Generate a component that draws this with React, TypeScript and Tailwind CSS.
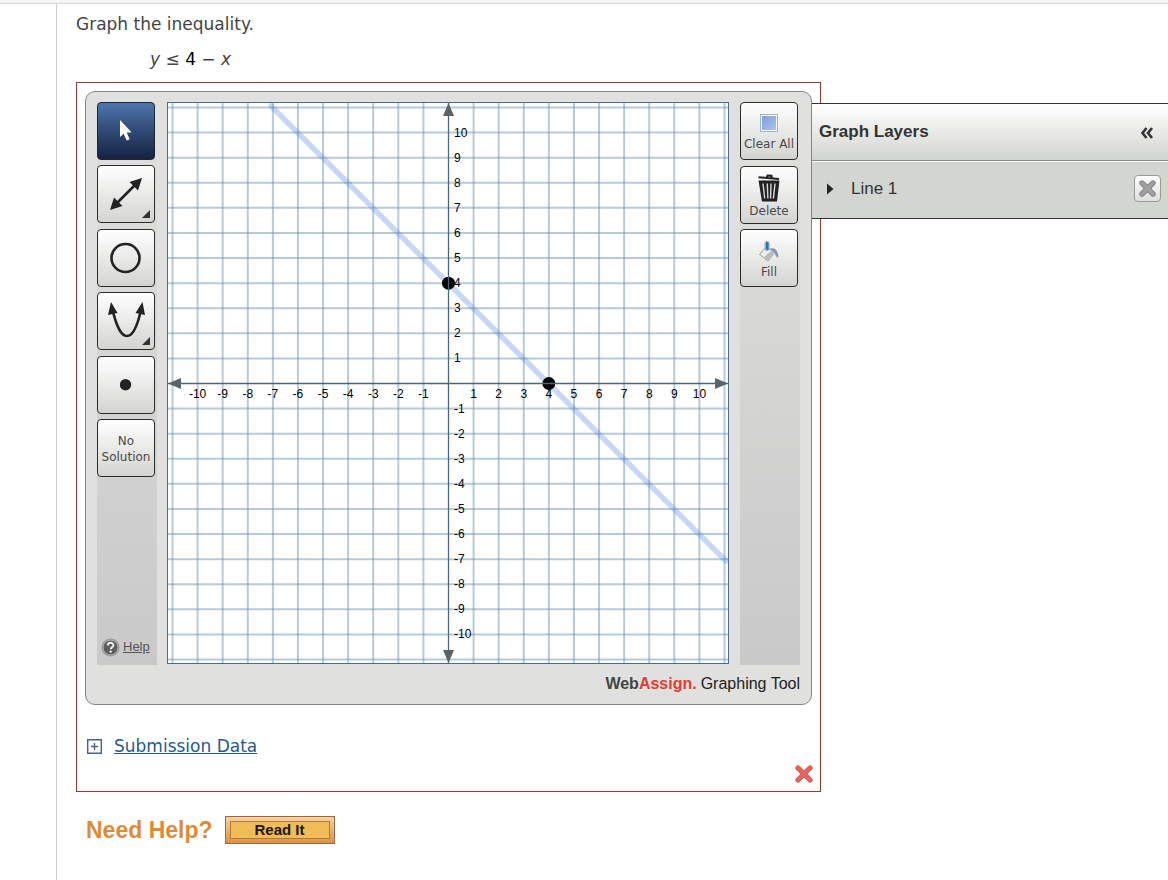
import type { ReactNode } from "react";

const UNIT = 25.09;
const CENTER = 281.5;
const SIZE = 562;

const at = (n: number) => CENTER + n * UNIT;

const gridLines = Array.from({ length: 23 }, (_, i) => i - 11).filter(
  (n) => n !== 0,
);
const ticks = gridLines.filter((n) => Math.abs(n) <= 10);

type ToolButtonProps = {
  label: string;
  active?: boolean;
  hasMenu?: boolean;
  children: ReactNode;
};

const ToolButton = ({ label, active, hasMenu, children }: ToolButtonProps) => {
  return (
    <button
      type="button"
      aria-label={label}
      className={
        active
          ? "relative flex h-[58px] w-[58px] flex-col items-center justify-center rounded-[4px] border border-[#1c2638] bg-linear-to-b from-[#4f76ad] to-[#152241]"
          : "relative flex h-[58px] w-[58px] flex-col items-center justify-center rounded-[4px] border border-[#2b2b2b] bg-linear-to-b from-white to-[#d4d4d2] text-xs text-[#4a4a4a]"
      }
    >
      {children}
      {hasMenu && (
        <svg
          className="absolute right-1 bottom-1"
          width="8"
          height="8"
          viewBox="0 0 8 8"
        >
          <path d="M8 0v8H0z" fill="#333" />
        </svg>
      )}
    </button>
  );
};

const Graph = () => {
  return (
    <svg
      width={SIZE}
      height={SIZE}
      viewBox="0 0 562 562"
      className="shrink-0 bg-white font-['Liberation_Sans',sans-serif]"
      role="img"
      aria-label="Graph"
    >
      <g stroke="#6a90b0" strokeOpacity="0.48" strokeWidth="2">
        {gridLines.map((n) => (
          <line key={`v${n}`} x1={at(n)} x2={at(n)} y1="0" y2={SIZE} />
        ))}
        {gridLines.map((n) => (
          <line key={`h${n}`} x1="0" x2={SIZE} y1={at(n)} y2={at(n)} />
        ))}
      </g>

      <line
        x1="104"
        y1="4"
        x2="559"
        y2="459"
        stroke="#5585e8"
        strokeOpacity="0.33"
        strokeWidth="5.5"
        strokeLinecap="round"
      />
      <circle cx={at(0)} cy={at(-4)} r="6.5" fill="#000" />
      <circle cx={at(4)} cy={at(0)} r="6.5" fill="#000" />

      <path d="M281.5 0v562M0 281.5h562" stroke="#4b6579" strokeWidth="1.3" />
      <path
        d="M281.5 1l5.5 13h-11zM281.5 561l5.5-13h-11zM1 281.5l13-5.5v11zM561 281.5l-13-5.500v11z"
        fill="#5a6468"
      />

      <g fontSize="12" fill="#000">
        {ticks.map((n) => (
          <text key={`x${n}`} x={at(n)} y="296" textAnchor="middle">
            {n}
          </text>
        ))}
        {ticks.map((n) => (
          <text key={`y${n}`} x="287" y={at(-n) + 4}>
            {n}
          </text>
        ))}
      </g>

      <rect
        x="0.5"
        y="0.5"
        width="561"
        height="561"
        fill="none"
        stroke="#4a6a92"
      />
    </svg>
  );
};

const LeftTools = () => {
  return (
    <div className="flex w-[60px] flex-col justify-between bg-linear-to-b from-[#e0e0de] to-[#c9c9c9]">
      <div className="flex h-[375px] flex-col justify-between">
        <ToolButton label="Select" active>
          <svg width="16" height="24" viewBox="0 0 16 24">
            <path
              d="M2 1v17l3.600-3.200L8.700 21.500l3-1.300-3-6.700h5z"
              fill="#fff"
            />
          </svg>
        </ToolButton>
        <ToolButton label="Line" hasMenu>
          <svg width="36" height="36" viewBox="0 0 36 36">
            <path d="M8 28L28 8" stroke="#222" strokeWidth="2.6" />
            <path
              d="M2 34l4-12.500 8.500 8.500zM34 2l-12.500 4 8.500 8.500z"
              fill="#222"
            />
          </svg>
        </ToolButton>
        <ToolButton label="Circle">
          <svg width="32" height="32" viewBox="0 0 32 32">
            <circle
              cx="15.5"
              cy="16"
              r="14"
              fill="none"
              stroke="#222"
              strokeWidth="2.6"
            />
          </svg>
        </ToolButton>
        <ToolButton label="Parabola" hasMenu>
          <svg width="38" height="38" viewBox="0 0 38 38">
            <path
              d="M6 10C10 25 14 34 20 34S30 25 33.500 10"
              fill="none"
              stroke="#222"
              strokeWidth="2.6"
            />
            <path d="M4 0l6.500 11L1 13zM35.500 0L38 13l-9.500-2z" fill="#222" />
          </svg>
        </ToolButton>
        <ToolButton label="Point">
          <svg width="12" height="12" viewBox="0 0 12 12">
            <circle cx="5.5" cy="5.7" r="5.7" fill="#222" />
          </svg>
        </ToolButton>
        <ToolButton label="No Solution">
          <span className="pt-[2px] leading-4">No</span>
          <span className="leading-4">Solution</span>
        </ToolButton>
      </div>

      <a
        href="#help"
        className="flex items-center gap-[3px] px-1 pb-2 font-['Liberation_Sans',sans-serif] text-[13px] leading-5 text-[#555]"
      >
        <svg width="19" height="19" viewBox="0 0 19 19">
          <circle cx="9.5" cy="9.5" r="9" fill="#929292" />
          <circle cx="9.5" cy="9.5" r="7.5" fill="#5c5c5c" stroke="#b8b8b8" />
          <path
            d="M6.800 7.500c0-3.600 5.600-3.400 5.600-.3 0 2-2.700 2-2.700 4"
            fill="none"
            stroke="#eee"
            strokeWidth="2"
          />
          <circle cx="9.7" cy="13.6" r="1.2" fill="#eee" />
        </svg>
        <span className="underline">Help</span>
      </a>
    </div>
  );
};

const RightTools = () => {
  return (
    <div className="w-[60px] bg-linear-to-b from-[#e0e0de] to-[#c9c9c9]">
      <div className="flex h-[185px] flex-col justify-between">
        <ToolButton label="Clear All">
          <svg className="my-1" width="18" height="18" viewBox="0 0 18 18">
            <defs>
              <linearGradient id="square" x1="0" y1="0" x2="1" y2="1">
                <stop offset="0" stopColor="#7f9fdc" />
                <stop offset="1" stopColor="#abc2ef" />
              </linearGradient>
            </defs>
            <rect
              x="0.5"
              y="0.5"
              width="17"
              height="17"
              fill="#fff"
              stroke="#9db2d9"
            />
            <rect x="2" y="2" width="14" height="14" fill="url(#square)" />
          </svg>
          <span className="leading-4 whitespace-nowrap">Clear All</span>
        </ToolButton>
        <ToolButton label="Delete">
          <svg className="mt-1" width="24" height="29" viewBox="0 0 24 29">
            <path
              d="M1.500 3.200L22 5M10 3.500l.5-2 4 .3.300 2.200"
              fill="none"
              stroke="#222"
              strokeWidth="2"
            />
            <path d="M1.500 6.500h21L20 27.500H5z" fill="#222" />
            <path
              d="M6 9.500l1.700 15M10.300 9.500l.6 15M14 9.500l-.4 15M18 9.500l-1.600 15"
              stroke="#d8d8d8"
              strokeWidth="1.4"
            />
          </svg>
          <span className="leading-4">Delete</span>
        </ToolButton>
        <ToolButton label="Fill">
          <svg className="mt-1" width="22" height="24" viewBox="0 0 22 24">
            <path
              d="M1.500 14.500L8.500 6.500l8 6-6.500 8.500z"
              fill="#eee"
              stroke="#999"
            />
            <path d="M6 17l8-7 2.500 2.500-6.500 8.500z" fill="#bbb" />
            <path
              d="M11 9c5-2 9 .5 9.500 8.500-2-.3-3-1.500-3.500-4L14 10z"
              fill="#7899bf"
            />
            <rect x="6.5" y="1" width="5" height="10" rx="2.5" fill="#8fb2e0" />
            <rect x="8" y="2" width="2.5" height="8" rx="1.2" fill="#3c6cae" />
          </svg>
          <span className="leading-4">Fill</span>
        </ToolButton>
      </div>
    </div>
  );
};

const GraphingTool = () => {
  return (
    <section className="rounded-[10px] border border-[#858585] bg-[#e0e0de] px-[11px] pt-[10px]">
      <div className="flex h-[563px]">
        <LeftTools />
        <div className="mr-[11px] ml-[10px]">
          <Graph />
        </div>
        <RightTools />
      </div>
      <p className="flex h-[39px] items-center justify-end gap-1 pb-[2px] font-['Liberation_Sans',sans-serif] text-base">
        <strong className="text-[#444]">
          Web<span className="text-[#e63a35]">Assign.</span>
        </strong>
        <span className="text-[#222]">Graphing Tool</span>
      </p>
    </section>
  );
};

const GraphLayers = () => {
  return (
    <aside className="mt-[21px] -ml-[9px] flex-1 self-start border-y border-[#333] font-['Liberation_Sans',sans-serif] text-[17px] text-[#333]">
      <header className="flex h-[57px] items-center justify-between border-b border-[#8a8a8a] bg-linear-to-b from-white to-[#d3d5d0] pr-[14px] pl-[7px]">
        <h2 className="font-bold">Graph Layers</h2>
        <button type="button" aria-label="Collapse" className="pt-[2px]">
          <svg width="14" height="12" viewBox="0 0 14 12">
            <path
              d="M6.500 1L2.500 6l4 5M12 1L8 6l4 5"
              fill="none"
              stroke="#333"
              strokeWidth="2.6"
            />
          </svg>
        </button>
      </header>
      <div className="flex h-[57px] items-center justify-between border-t border-white bg-[#d3d5d0] pr-[7px] pb-[3px] pl-[15px]">
        <button type="button" className="flex items-center gap-[17px]">
          <svg width="7" height="12" viewBox="0 0 7 12">
            <path d="M0 0.500L6.500 6 0 11.500z" fill="#222" />
          </svg>
          Line 1
        </button>
        <button
          type="button"
          aria-label="Remove Line 1"
          className="flex h-[27px] w-[27px] items-center justify-center rounded-[4px] border border-[#9a9a9a] bg-linear-to-b from-white to-[#dedede]"
        >
          <svg width="19" height="19" viewBox="0 0 19 19">
            <path
              d="M4 4l11 11M15 4L4 15"
              stroke="#808080"
              strokeWidth="5.4"
              strokeLinecap="round"
            />
            <path
              d="M4 4l11 11M15 4L4 15"
              stroke="#a0a0a0"
              strokeWidth="3.6"
              strokeLinecap="round"
            />
          </svg>
        </button>
      </div>
    </aside>
  );
};

const App = () => {
  return (
    <div className="flex min-h-screen flex-col bg-white font-['DejaVu_Sans',sans-serif]">
      <div className="h-1 border-b border-[#d8d8d8] bg-[#f5f5f5]" />
      <main className="ml-14 flex-1 border-l border-[#ccc] pt-2 pl-[19px] text-[17px] text-[#444]">
        <p className="leading-6">Graph the inequality.</p>
        <p className="mt-[11px] pl-[74px] leading-6">
          <i>y</i> ≤ <span className="text-black">4</span> − <i>x</i>
        </p>

        <div className="mt-[11px] flex">
          <div className="shrink-0 border border-[#9c3433] px-2 pt-2 pb-2">
            <GraphingTool />
            <div className="mt-[29px] flex items-center gap-3 pl-[2px]">
              <button type="button" aria-label="Expand">
                <svg
                  className="block"
                  width="15"
                  height="15"
                  viewBox="0 0 15 15"
                >
                  <path
                    d="M.7.700h13.600v13.600H.7zM7.500 4v7M4 7.500h7"
                    fill="none"
                    stroke="#47628f"
                    strokeWidth="1.4"
                  />
                </svg>
              </button>
              <a
                href="#submission"
                className="leading-6 text-[#265a8f] underline"
              >
                Submission Data
              </a>
            </div>
            <div className="mt-[7px] -mr-px flex justify-end">
              <svg
                width="18"
                height="18"
                viewBox="0 0 18 18"
                role="img"
                aria-label="Incorrect"
              >
                <path
                  d="M3 3l12 12M15 3L3 15"
                  stroke="#d8504f"
                  strokeWidth="5.2"
                  strokeLinecap="round"
                />
                <path
                  d="M3 3l12 12M15 3L3 15"
                  stroke="#e26664"
                  strokeWidth="3.6"
                  strokeLinecap="round"
                />
              </svg>
            </div>
          </div>
          <GraphLayers />
        </div>

        <div className="mt-6 flex items-center gap-3 pl-[10px] font-['Liberation_Sans',sans-serif] font-bold">
          <p className="text-[23px] leading-7 text-[#dc8b38]">Need Help?</p>
          <button
            type="button"
            className="h-7 w-[110px] border border-[#a06a34] bg-linear-to-b from-[#f6d3a4] to-[#dd9145] p-1 text-[15px] text-[#1d1505]"
          >
            <span className="flex h-full items-center justify-center border border-[#b27a35] bg-[#f0bc58]">
              Read It
            </span>
          </button>
        </div>
      </main>
    </div>
  );
};

export default App;
